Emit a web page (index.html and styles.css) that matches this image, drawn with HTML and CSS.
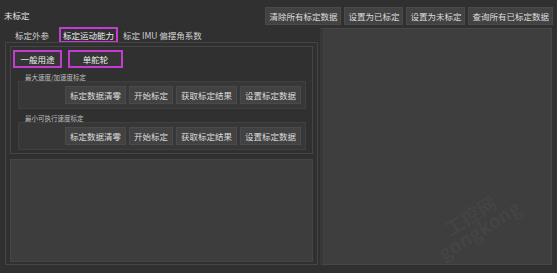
FILE: index.html
```html
<!DOCTYPE html>
<html lang="zh-CN">
<head>
    <meta charset="UTF-8">
    <title>未标定</title>
    <link rel="stylesheet" href="styles.css">
</head>
<body>
    <div class="window">
        <div class="topbar">
            <span class="title">未标定</span>
            <div class="top-actions">
                <button class="btn">清除所有标定数据</button>
                <button class="btn">设置为已标定</button>
                <button class="btn">设置为未标定</button>
                <button class="btn">查询所有已标定数据</button>
            </div>
        </div>

        <div class="main">
            <div class="left">
                <div class="tabs">
                    <span class="tab">标定外参</span>
                    <span class="tab marked">标定运动能力</span>
                    <span class="tab">标定 IMU 偏摆角系数</span>
                </div>
                <div class="tab-panel">
                    <div class="inner">
                        <div class="subtabs">
                            <span class="subtab marked">一般用途</span>
                            <span class="subtab marked">单舵轮</span>
                        </div>
                        <div class="group-title">最大速度/加速度标定</div>
                        <div class="group">
                            <button class="btn">标定数据清零</button>
                            <button class="btn">开始标定</button>
                            <button class="btn">获取标定结果</button>
                            <button class="btn">设置标定数据</button>
                        </div>
                        <div class="group-title">最小可执行速度标定</div>
                        <div class="group">
                            <button class="btn">标定数据清零</button>
                            <button class="btn">开始标定</button>
                            <button class="btn">获取标定结果</button>
                            <button class="btn">设置标定数据</button>
                        </div>
                    </div>
                    <div class="log"></div>
                </div>
            </div>
            <div class="right"></div>
        </div>
        <div class="statusbar"></div>
    </div>
    <div class="watermark">工控网<br>gongkong</div>
</body>
</html>
```

FILE: styles.css
```css
body {
    margin: 0;
    width: 557px;
    height: 273px;
    overflow: hidden;
    background-color: #303030;
    font-family: "Noto Sans CJK SC", "Noto Sans", sans-serif;
    font-size: 8.5px;
    color: #d8d8d8;
    position: relative;
}
.window {
    display: flex;
    flex-direction: column;
    height: 273px;
    padding: 5px 5px 0 5px;
    box-sizing: border-box;
}
.topbar {
    display: flex;
    align-items: center;
    justify-content: space-between;
    height: 21px;
}
.title {
    margin-left: -1px;
    margin-top: -1px;
    color: #e4e4e4;
}
.top-actions {
    display: flex;
    gap: 3px;
    margin-right: -1px;
}
.top-actions .btn {
    padding: 0 3px;
}
.btn {
    font-family: inherit;
    font-size: 8.5px;
    color: #dcdcdc;
    background-color: #424242;
    border: 1px solid #4a4a4a;
    padding: 0 4px;
    height: 18px;
    line-height: 16px;
}
.main {
    display: flex;
    flex: 1;
    gap: 2px;
    margin-top: 1px;
}
.left {
    width: 313px;
    display: flex;
    flex-direction: column;
}
.tabs {
    display: flex;
    align-items: center;
    height: 15px;
    padding-left: 8px;
    gap: 3px;
}
.tab {
    color: #cfcfcf;
    padding: 0 2px;
    line-height: 12px;
}
.tabs .marked {
    margin-left: 5px;
}
.marked {
    border: 2px solid #c23ccf;
    color: #f0f0f0;
}
.tab-panel {
    flex: 1;
    display: flex;
    flex-direction: column;
    border: 1px solid #454545;
    padding: 3px 4px 2px 4px;
    gap: 5px;
}
.inner {
    border: 1px solid #454545;
    padding: 3px 6px 4px 2px;
    height: 108px;
    box-sizing: border-box;
}
.subtabs {
    display: flex;
    gap: 6px;
}
.subtab {
    width: 45px;
    height: 14px;
    line-height: 14px;
    text-align: center;
    background-color: #353535;
}
.subtab + .subtab {
    width: 51px;
}
.group-title {
    font-size: 6.5px;
    color: #c0c0c0;
    margin: 5px 0 0 12px;
    line-height: 8px;
}
.group {
    display: flex;
    justify-content: flex-end;
    gap: 3px;
    margin-left: 5px;
    padding: 4px 4px;
    background-color: #373737;
    border: 1px solid #404040;
}
.log {
    flex: 1;
    background-color: #3d3d3d;
    border: 1px solid #454545;
}
.right {
    flex: 1;
    margin-top: 1px;
    background-color: #3e3e3e;
    border: 1px solid #474747;
    border-left: 3px solid #383838;
}
.statusbar {
    height: 8px;
}
.watermark {
    position: absolute;
    left: 428px;
    top: 205px;
    transform: rotate(-32deg);
    font-size: 19px;
    line-height: 17px;
    font-weight: bold;
    color: rgba(255, 255, 255, 0.04);
    text-align: center;
}
```
